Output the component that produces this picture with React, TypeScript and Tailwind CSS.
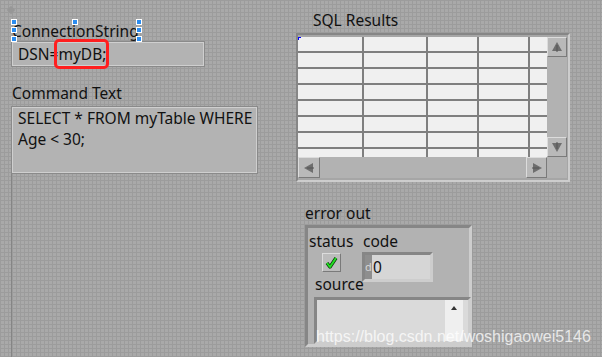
import React from "react";

const bevelIn = "border-t-[#868686] border-l-[#868686] border-b-[#cdcdcd] border-r-[#cdcdcd]";
const bevelOut = "border-t-[#dcdcdc] border-l-[#dcdcdc] border-b-[#7a7a7a] border-r-[#7a7a7a]";

function Arrow({ dir }: { dir: "up" | "down" | "left" | "right" }) {
  const rot = { up: 0, down: 180, left: 270, right: 90 }[dir];
  return (
    <svg width="12" height="12" viewBox="0 0 12 12" style={{ transform: `rotate(${rot}deg)` }}>
      <path d="M6 1 L11 10 L1 10 Z" fill="#6e6e6e" />
      <path d="M6 4 L6 11" stroke="#555" strokeWidth="1" />
    </svg>
  );
}

function ScrollButton({ dir, className }: { dir: "up" | "down" | "left" | "right"; className: string }) {
  return (
    <div className={`flex items-center justify-center border ${bevelOut} bg-[#b9b9b9] ${className}`}>
      <Arrow dir={dir} />
    </div>
  );
}

function Handle({ x, y }: { x: number; y: number }) {
  return (
    <div
      className="absolute h-[6px] w-[6px] border border-white bg-[#2b8cf0]"
      style={{ left: x - 3, top: y - 3 }}
    />
  );
}

function ResultsTable() {
  const cols = ["w-[66px]", "w-[64px]", "w-[51px]", "w-[51px]", "flex-1"];
  const rows = [16, 16, 16, 16, 16, 16, 16, 8];
  return (
    <div className="relative flex h-[120px] w-[249px] flex-col overflow-hidden bg-[#f0f0f0]">
      {rows.map((h, r) => (
        <div key={r} className="flex" style={{ height: h }}>
          {cols.map((c, i) => (
            <div
              key={i}
              className={`${c} border-[#7f7f7f] ${i < 4 ? "border-r-2" : ""} ${r < 7 ? "border-b-2" : ""}`}
            />
          ))}
        </div>
      ))}
      <div className="absolute left-0 top-0 h-[3px] w-[3px] border-l border-t border-[#0000ff]" />
    </div>
  );
}

function ErrorCluster() {
  return (
    <div className={`flex h-[122px] w-[167px] flex-col border-[3px] ${bevelIn} bg-[#b2b2b2] pl-[1px] pt-[3px]`}>
      <div className="flex">
        <div className="flex w-[53px] flex-col">
          <span>status</span>
          <div className={`ml-[13px] mt-[2px] flex h-[19px] w-[19px] items-center justify-center border ${bevelOut} bg-[#bcbcbc]`}>
            <svg width="13" height="13" viewBox="0 0 13 13">
              <path d="M2 7 L5 11 L11 2" fill="none" stroke="#0a3a0a" strokeWidth="3.4" strokeLinejoin="round" />
              <path d="M2 7 L5 11 L11 2" fill="none" stroke="#22e022" strokeWidth="2" strokeLinejoin="round" />
            </svg>
          </div>
        </div>
        <div className="flex flex-col">
          <span className="pl-px">code</span>
          <div className={`mt-px flex h-[30px] w-[71px] border-[3px] ${bevelIn} bg-[#c9c9c9]`}>
            <div className="flex w-[7px] items-center justify-center bg-[#8e8e8e] text-[11px] text-[#d6d6d6]">d</div>
            <div className="flex-1 bg-[#d6d6d6] pl-px leading-[24px]">0</div>
          </div>
        </div>
      </div>
      <span className="-mt-[8px] pl-[6px]">source</span>
      <div className={`ml-[5px] mt-[3px] flex h-[60px] w-[157px] justify-end border-[3px] ${bevelIn} bg-[#dadada] pr-[5px]`}>
        <div className="flex w-[18px] justify-center bg-[#efefef] pt-[5px]">
          <svg width="8" height="6" viewBox="0 0 8 6">
            <path d="M4 1 L7 5 L1 5 Z" fill="#333" />
          </svg>
        </div>
      </div>
    </div>
  );
}

export default function App() {
  return (
    <div className="relative h-[357px] w-[602px] overflow-hidden bg-[#a9a9a9] bg-[image:linear-gradient(to_right,#9c9c9c_1px,transparent_1px),linear-gradient(to_bottom,#9c9c9c_1px,transparent_1px)] bg-size-[4px_4px] font-['Noto_Sans',sans-serif] text-[15.5px] leading-[20px] text-[#111]">
      {/* panel origin marker */}
      <div className="absolute left-[8px] top-[7px] h-[6px] w-[6px] rotate-45 bg-[#979797]" />
      <div className="absolute left-[11px] top-[174px] h-[183px] w-px bg-[#858585]" />

      {/* ConnectionString (selected) */}
      <div className="absolute left-[11px] top-[21px] flex flex-col">
        <span className="pl-px">ConnectionString</span>
        <div className="h-[26px] w-[194px] border border-[#8a8a8a]">
          <div className="flex h-full items-center border border-[#cfcfcf] bg-[#b3b3b3] pl-[5px]">DSN=myDB;</div>
        </div>
      </div>
      <Handle x={14} y={22} />
      <Handle x={75} y={22} />
      <Handle x={139} y={22} />
      <Handle x={14} y={30} />
      <Handle x={139} y={30} />
      <Handle x={14} y={39} />
      <Handle x={139} y={39} />
      <div className="absolute left-[54px] top-[39px] h-[30px] w-[55px] rounded-[5px] border-[3px] border-[#ff1f1f]" />

      {/* Command Text */}
      <div className="absolute left-[11px] top-[83px] flex flex-col">
        <span className="pl-px">Command Text</span>
        <div className="mt-[3px] h-[68px] w-[247px] border border-[#8a8a8a]">
          <div className="h-full border border-[#cfcfcf] bg-[#b3b3b3] pl-[5px] leading-[21px]">
            SELECT * FROM myTable WHERE
            <br />
            Age &lt; 30;
          </div>
        </div>
      </div>

      {/* SQL Results */}
      <div className="absolute left-[296px] top-[10px] flex flex-col">
        <span className="pl-[17px]">SQL Results</span>
        <div className={`mt-[3px] flex h-[149px] w-[274px] flex-col border-[2px] ${bevelIn} bg-[#a6a6a6] py-[2px]`}>
          <div className="flex">
            <ResultsTable />
            <div className="flex h-[120px] w-[20px] flex-col justify-between bg-[#b2b2b2]">
              <ScrollButton dir="up" className="h-[20px] w-[20px]" />
              <ScrollButton dir="down" className="h-[20px] w-[20px]" />
            </div>
          </div>
          <div className="flex h-[21px] w-[269px] bg-[#b2b2b2]">
            <div className="flex w-[249px] justify-between">
              <ScrollButton dir="left" className="h-[21px] w-[22px]" />
              <ScrollButton dir="right" className="h-[21px] w-[21px]" />
            </div>
          </div>
        </div>
      </div>

      {/* error out cluster */}
      <div className="absolute left-[305px] top-[203px] flex flex-col">
        <span>error out</span>
        <div className="mt-[2px]">
          <ErrorCluster />
        </div>
      </div>

      {/* watermark */}
      <div className="absolute left-[316px] top-[327px] font-['Liberation_Sans',Arial,sans-serif] text-[16px] leading-[20px] text-white/75">
        https://blog.csdn.net/woshigaowei5146
      </div>
    </div>
  );
}
